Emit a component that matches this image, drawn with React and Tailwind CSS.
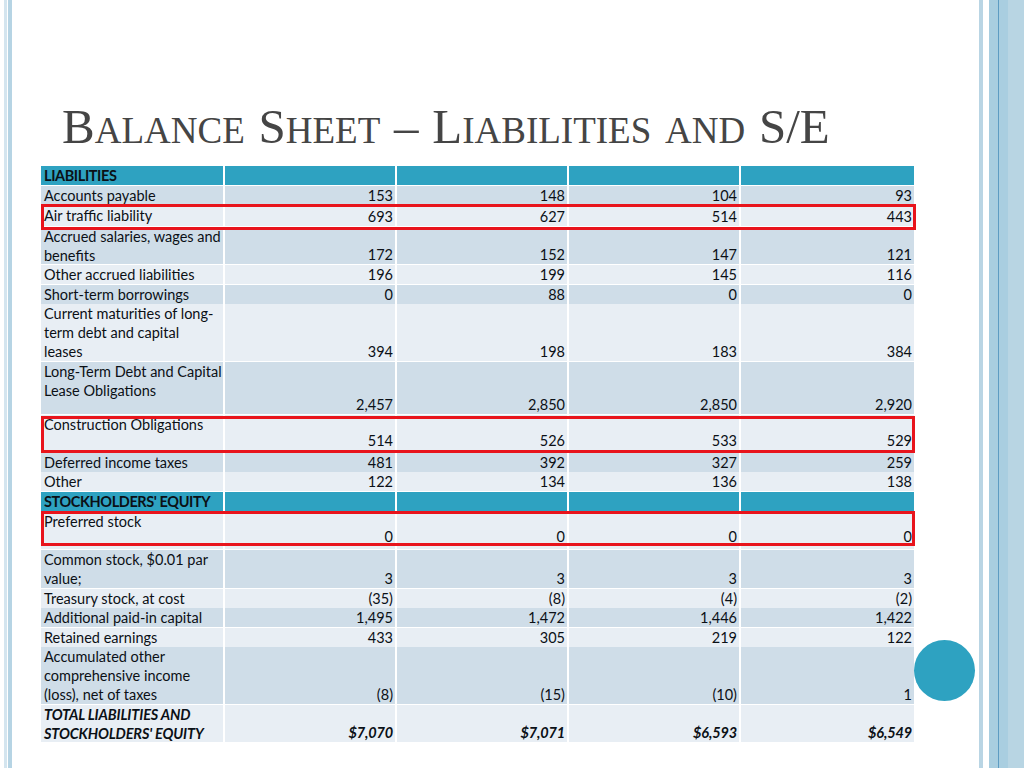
const rows = [
  { label: ["LIABILITIES"], head: true, h: "h-[19px]" },
  { label: ["Accounts payable"], v: ["153", "148", "104", "93"], h: "h-[19px]" },
  { label: ["Air traffic liability"], v: ["693", "627", "514", "443"], h: "h-[20px]", box: "top-[-2px] bottom-[-4px] left-0 right-[-2px]" },
  { label: ["Accrued salaries, wages and", "benefits"], v: ["172", "152", "147", "121"], h: "h-[37px]" },
  { label: ["Other accrued liabilities"], v: ["196", "199", "145", "116"], h: "h-[19px]" },
  { label: ["Short-term borrowings"], v: ["0", "88", "0", "0"], h: "h-[18px]" },
  { label: ["Current maturities of long-", "term debt and capital", "leases"], v: ["394", "198", "183", "384"], h: "h-[57px]" },
  { label: ["Long-Term Debt and Capital", "Lease Obligations"], v: ["2,457", "2,850", "2,850", "2,920"], h: "h-[52px]" },
  { label: ["Construction Obligations"], v: ["514", "526", "533", "529"], h: "h-[37px]", pad: "pb-[2px]", box: "top-[1px] bottom-[-1px] left-0 right-[-1px]" },
  { label: ["Deferred income taxes"], v: ["481", "392", "327", "259"], h: "h-[18px]" },
  { label: ["Other"], v: ["122", "134", "136", "138"], h: "h-[19px]" },
  { label: ["STOCKHOLDERS' EQUITY"], head: true, h: "h-[19px]" },
  { label: ["Preferred stock"], v: ["0", "0", "0", "0"], h: "h-[37px]", pad: "pb-[3px]", box: "top-[-1px] bottom-[3px] left-0 right-[-1px]" },
  { label: ["Common stock, $0.01 par", "value;"], v: ["3", "3", "3", "3"], h: "h-[38px]" },
  { label: ["Treasury stock, at cost"], v: ["(35)", "(8)", "(4)", "(2)"], h: "h-[18px]" },
  { label: ["Additional paid-in capital"], v: ["1,495", "1,472", "1,446", "1,422"], h: "h-[19px]" },
  { label: ["Retained earnings"], v: ["433", "305", "219", "122"], h: "h-[18px]" },
  { label: ["Accumulated other", "comprehensive income", "(loss), net of taxes"], v: ["(8)", "(15)", "(10)", "1"], h: "h-[57px]" },
  { label: ["TOTAL LIABILITIES AND", "STOCKHOLDERS' EQUITY"], v: ["$7,070", "$7,071", "$6,593", "$6,549"], h: "h-[37px]", total: true },
];

function Row({ row, index }) {
  const bg = row.head ? "bg-[#2ea2c1]" : index % 2 === 1 ? "bg-[#cfdde8]" : "bg-[#e8eef4]";
  const weight = row.total
    ? "font-bold italic tracking-[-0.15px]"
    : row.head
      ? "font-bold tracking-[-0.4px]"
      : "";
  return (
    <div className={`relative grid grid-cols-[182px_170px_170px_170px_173px] gap-x-[2px] ${row.h}`}>
      <div className={`${bg} ${weight} pl-[3px] leading-[19px] text-[#0b1016] whitespace-nowrap overflow-hidden`}>
        {row.label.map((l, i) => (
          <div key={i}>{l}</div>
        ))}
      </div>
      {[0, 1, 2, 3].map((i) => (
        <div key={i} className={`${bg} ${weight} ${row.pad || ""} flex items-end justify-end pr-[2px] leading-[19px] text-[#0b1016]`}>
          {row.v ? row.v[i] : ""}
        </div>
      ))}
      {row.box && <div className={`absolute z-10 ${row.box} border-[3px] border-[#e8141c] pointer-events-none`} />}
    </div>
  );
}

function Word({ first, rest }) {
  return (
    <span>
      <span className="text-[49px]">{first}</span>
      <span className="text-[37px] uppercase">{rest}</span>
    </span>
  );
}

export default function App() {
  return (
    <div className="relative w-[1024px] h-[768px] bg-white overflow-hidden flex">
      <div className="flex h-full shrink-0">
        <div className="w-[4px]" />
        <div className="w-[3px] bg-[#d4e5ef]" />
        <div className="w-[1px]" />
        <div className="w-[4px] bg-[#b6d4e4]" />
      </div>

      <div className="flex-1 flex flex-col">
        <h1
          className="pl-[50px] pt-[102px] h-[154px] text-[49px] font-normal leading-[50px] text-[#454545] whitespace-nowrap [word-spacing:1.5px]"
          style={{ fontFamily: '"Liberation Serif", "Times New Roman", serif' }}
        >
          <Word first="B" rest="alance" /> <Word first="S" rest="heet" /> <span>–</span>{" "}
          <Word first="L" rest="iabilities" /> <span className="text-[37px] uppercase">and</span> <span>S/E</span>
        </h1>

        <div
          className="ml-[29px] mt-[12px] w-[873px] flex flex-col gap-y-[1px] text-[14.5px]"
          style={{ fontFamily: "Lato, 'Open Sans', sans-serif" }}
        >
          {rows.map((r, i) => (
            <Row key={i} row={r} index={i} />
          ))}
        </div>
      </div>

      <div className="flex h-full shrink-0">
        <div className="w-[4px] bg-[#b9d5e4]" />
        <div className="w-[6px]" />
        <div className="w-[9px] bg-[#a9cee0]" />
        <div className="w-[1px] bg-[#5e9cc2]" />
        <div className="w-[9px] bg-[#a9cee0]" />
        <div className="w-[16px] bg-[#b8d5e3]" />
      </div>

      <div className="absolute left-[914px] top-[640px] w-[61px] h-[61px] rounded-full bg-[#2ea2c1]" />
    </div>
  );
}
